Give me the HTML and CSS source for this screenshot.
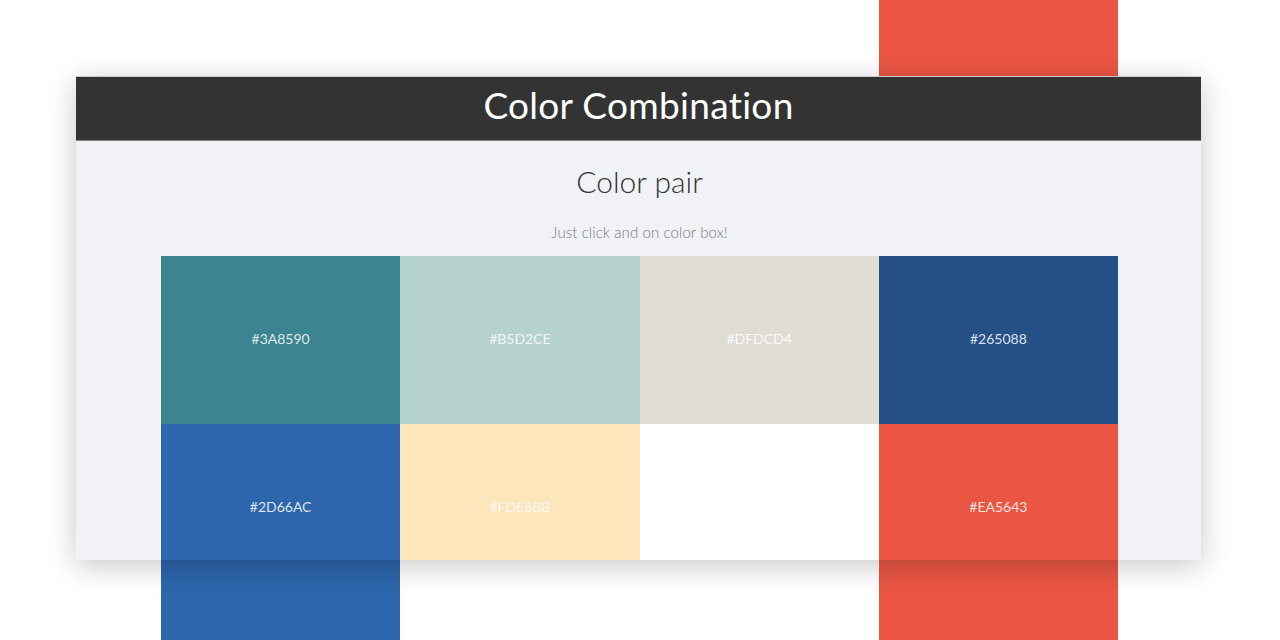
FILE: index.html
```html
<!DOCTYPE html>
<html lang="en">
<head>
<meta charset="utf-8">
<title>Color Combination</title>
<link rel="stylesheet" href="styles.css">
</head>
<body>
  <div class="backdrop">
    <div class="back-col back-blue"></div>
    <div class="back-col back-red"></div>
  </div>

  <main class="card">
    <header class="card-header">
      <h1 class="title">Color Combination</h1>
    </header>
    <section class="card-body">
      <h2 class="subtitle">Color pair</h2>
      <p class="hint">Just click and on color box!</p>
      <div class="swatches">
        <div class="swatch" style="background:#3A8590">#3A8590</div>
        <div class="swatch" style="background:#B5D2CE">#B5D2CE</div>
        <div class="swatch" style="background:#DFDCD4">#DFDCD4</div>
        <div class="swatch" style="background:#265088">#265088</div>
        <div class="swatch" style="background:#2D66AC">#2D66AC</div>
        <div class="swatch" style="background:#FDE6BB">#FDE6BB</div>
        <div class="swatch" style="background:#FFFFFF">#FFFFFF</div>
        <div class="swatch" style="background:#EA5643">#EA5643</div>
      </div>
    </section>
  </main>
</body>
</html>
```

FILE: styles.css
```css
* { box-sizing: border-box; }

html, body {
  margin: 0;
  padding: 0;
  background: #ffffff;
  width: 1280px;
  height: 640px;
  overflow: hidden;
  font-family: "Lato", "Open Sans", sans-serif;
}

.backdrop {
  display: grid;
  grid-template-columns: repeat(4, 1fr);
  width: 957px;
  height: 640px;
  margin-left: 161px;
}

.back-blue {
  grid-column: 1;
  grid-row: 1;
  margin-top: 424px;
  background: #2D66AC;
}

.back-red {
  grid-column: 4;
  grid-row: 1;
  background: #EA5643;
}

.card {
  position: absolute;
  top: 76px;
  left: 76px;
  width: 1125px;
  height: 484px;
  overflow: hidden;
  display: flex;
  flex-direction: column;
  background: #f1f2f6;
  box-shadow: 0 6px 28px rgba(0, 0, 0, 0.22);
}

.card-header {
  height: 65px;
  flex: none;
  display: flex;
  align-items: center;
  justify-content: center;
  padding-bottom: 7px;
  background: #333333;
  border-top: 1px solid #c8c8c8;
  border-bottom: 1px solid #808080;
}

.title {
  margin: 0;
  color: #ffffff;
  font-weight: 400;
  font-size: 37px;
  line-height: 44px;
  letter-spacing: 0.3px;
}

.card-body {
  flex: 1;
  padding: 0 83px 0 85px;
  display: flex;
  flex-direction: column;
  align-items: stretch;
}

.subtitle {
  margin: 20px 0 0;
  text-align: center;
  color: #333333;
  font-weight: 300;
  font-size: 30px;
  line-height: 40px;
}

.hint {
  margin: 21px 0 0;
  text-align: center;
  color: #7a7a7a;
  font-weight: 300;
  font-size: 15px;
  line-height: 20px;
  letter-spacing: 0.1px;
}

.swatches {
  margin-top: 14px;
  display: grid;
  grid-template-columns: repeat(4, 1fr);
  grid-auto-rows: 168px;
}

.swatch {
  display: flex;
  align-items: center;
  justify-content: center;
  padding-bottom: 3px;
  color: rgba(255, 255, 255, 0.85);
  font-family: "Lato", sans-serif;
  font-size: 14px;
  font-weight: 400;
}
```
